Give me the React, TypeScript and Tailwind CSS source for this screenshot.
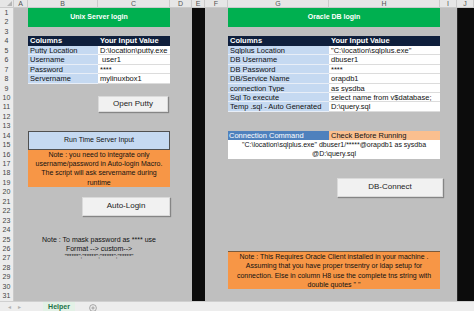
import React from 'react';

const colHeaders = ['', 'A', 'B', 'C', 'D', 'E', 'F', 'G', 'H', 'I', 'J'];
const rowNumbers = Array.from({ length: 31 }, (_, i) => i + 1);

const unixRows = [
  ['Putty Location', 'D:\\location\\putty.exe'],
  ['Username', ' user1'],
  ['Password', '****'],
  ['Servername', 'mylinuxbox1'],
];

const oracleRows = [
  ['Sqlplus Location', '"C:\\location\\sqlplus.exe"'],
  ['DB Username', 'dbuser1'],
  ['DB Password', '****'],
  ['DB/Service Name', 'orapdb1'],
  ['connection Type', 'as sysdba'],
  ['Sql To execute', 'select name from v$database;'],
  ['Temp .sql - Auto Generated', 'D:\\query.sql'],
];

function InputTable({ rows, labelWidth }: { rows: string[][]; labelWidth: string }) {
  return (
    <div className="flex flex-col">
      <div className="flex h-[9.45px] bg-[#0f1f3c] text-white font-bold leading-[9.45px]">
        <div className={`${labelWidth} pl-[2px]`}>Columns</div>
        <div className="flex-1 pl-[2px]">Your Input Value</div>
      </div>
      {rows.map(([label, value]) => (
        <div key={label} className="flex h-[9.45px] leading-[9px]">
          <div className={`${labelWidth} pl-[2px] bg-[#c5d9f1] border-b border-[#e8eef7] whitespace-nowrap overflow-hidden`}>
            {label}
          </div>
          <div className="flex-1 pl-[2px] bg-white border-b border-[#dcdcdc] whitespace-pre overflow-hidden">
            {value}
          </div>
        </div>
      ))}
    </div>
  );
}

function SheetButton({ label }: { label: string }) {
  return (
    <div className="h-full bg-[#f1f1f1] border border-[#dadada] shadow-[1px_1px_1px_rgba(0,0,0,0.3)] flex items-center justify-center text-[8px] text-[#222]">
      {label}
    </div>
  );
}

export default function App() {
  return (
    <div className="w-[474px] h-[311px] overflow-hidden flex flex-col bg-[#bfbfbf] font-['Liberation_Sans',Arial,sans-serif] text-[7.5px] text-[#111]">
      <div className="grid grid-cols-[14px_14px_70px_72px_22px_13px_23px_101px_111px_17px_1fr] grid-rows-[8px_repeat(31,9.45px)]">
        {/* column header strip */}
        {colHeaders.map((c, i) => (
          <div
            key={i}
            className="relative bg-[#e6e6e6] border-r border-b border-[#cacaca] text-[7px] leading-[8px] text-center text-[#555]"
          >
            {c}
            {i === 0 && (
              <svg className="absolute right-[1px] bottom-[1px]" width="5" height="5" viewBox="0 0 5 5">
                <polygon points="5,0 5,5 0,5" fill="#b4b4b4" />
              </svg>
            )}
          </div>
        ))}

        {/* row numbers */}
        <div className="col-start-1 row-start-2 row-span-31 flex flex-col bg-[#ececec] border-r border-[#cacaca]">
          {rowNumbers.map((n) => (
            <div key={n} className="h-[9.45px] text-[7px] leading-[9.45px] text-center text-[#444]">
              {n}
            </div>
          ))}
        </div>

        {/* black separator columns */}
        <div className="col-start-6 row-start-2 row-span-31 bg-[#0c0c0c]" />
        <div className="col-start-11 row-start-2 row-span-31 bg-[#0c0c0c] border-l border-[#2a2a2a]" />

        {/* Unix side */}
        <div className="col-start-3 col-span-2 row-start-2 row-span-2 bg-[#00b050] flex items-center justify-center text-white font-bold text-[7px]">
          Unix Server login
        </div>
        <div className="col-start-3 col-span-2 row-start-5 row-span-5">
          <InputTable rows={unixRows} labelWidth="w-[70px]" />
        </div>
        <div className="col-start-4 row-start-11 row-span-2 mt-[3px] mr-[2px]">
          <SheetButton label="Open Putty" />
        </div>
        <div className="col-start-3 col-span-2 row-start-15 row-span-2 bg-[#c5d9f1] border border-[#505050] flex items-center justify-center text-[7px]">
          Run Time Server Input
        </div>
        <div className="col-start-3 col-span-2 row-start-17 row-span-4 bg-[#f79646] flex flex-col justify-center text-center text-[7px] leading-[9.4px]">
          <div>Note : you need to integrate only</div>
          <div>username/password in Auto-login Macro.</div>
          <div>The script will ask servername during</div>
          <div>runtime</div>
        </div>
        <div className="col-start-3 col-span-2 row-start-22 row-span-2 ml-[54px]">
          <SheetButton label="Auto-Login" />
        </div>
        <div className="col-start-3 col-span-2 row-start-26 row-span-3 flex flex-col text-center text-[7px] leading-[9.45px]">
          <div>Note : To mask password as **** use</div>
          <div>Format --&gt; custom--&gt;</div>
          <div className="text-[6px] leading-[7px]">"*****";"*****";"*****";"*****"</div>
        </div>

        {/* Oracle side */}
        <div className="col-start-8 col-span-2 row-start-2 row-span-2 bg-[#00b050] flex items-center justify-center text-white font-bold text-[7px]">
          Oracle DB login
        </div>
        <div className="col-start-8 col-span-2 row-start-5 row-span-8">
          <InputTable rows={oracleRows} labelWidth="w-[101px]" />
        </div>
        <div className="col-start-8 row-start-15 bg-[#4f81bd] text-white pl-[1px] leading-[9.45px] whitespace-nowrap">
          Connection Command
        </div>
        <div className="col-start-9 row-start-15 bg-[#fabf8f] pl-[2px] leading-[9.45px] whitespace-nowrap">
          Check Before Running
        </div>
        <div className="col-start-8 col-span-2 row-start-16 row-span-2 bg-white flex flex-col justify-center text-center text-[7px] leading-[8.5px]">
          <div>"C:\location\sqlplus.exe" dbuser1/*****@orapdb1 as sysdba</div>
          <div>@D:\query.sql</div>
        </div>
        <div className="col-start-9 col-span-2 row-start-20 row-span-2 ml-[8px] mr-[14px]">
          <SheetButton label="DB-Connect" />
        </div>
        <div className="col-start-8 col-span-2 row-start-28 row-span-4 -mt-[2px] mb-[2px] bg-[#f79646] border-t border-[#7a5a3c] flex flex-col justify-center text-center text-[7px] leading-[9.3px] whitespace-nowrap">
          <div>Note : This Requires Oracle Client installed in your machine .</div>
          <div>Assuming that you have proper tnsentry or ldap setup for</div>
          <div>connection. Else in column H8 use the complete tns string with</div>
          <div>double quotes " "</div>
        </div>
      </div>

      {/* sheet tabs */}
      <div className="flex-1 flex items-stretch bg-[#ededed] border-t border-[#d0d0d0]">
        <div className="flex items-center gap-[7px] pl-[8px] text-[6px] text-[#b0b0b0]">
          <span>◂</span>
          <span>▸</span>
        </div>
        <div className="ml-[22px] w-[32px] bg-[#e3f1e6] border-b-2 border-[#217346] flex items-center justify-center text-[7px] font-bold text-[#217346]">
          Helper
        </div>
        <div className="ml-[14px] flex items-center">
          <svg width="8" height="8" viewBox="0 0 8 8">
            <circle cx="4" cy="4" r="3.4" fill="none" stroke="#8a8a8a" strokeWidth="0.7" />
            <path d="M4 2.3V5.7M2.3 4H5.7" stroke="#8a8a8a" strokeWidth="0.7" />
          </svg>
        </div>
      </div>
    </div>
  );
}
